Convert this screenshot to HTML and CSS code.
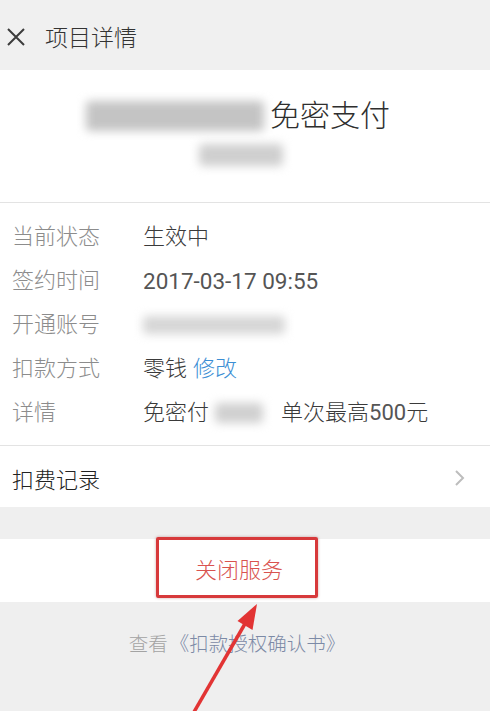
FILE: index.html
```html
<!DOCTYPE html>
<html lang="zh-CN">
<head>
<meta charset="utf-8">
<title>项目详情</title>
<link rel="stylesheet" href="styles.css">
</head>
<body>
<div class="page">
  <header class="topbar">
    <svg class="close" width="20" height="20" viewBox="0 0 20 20"><path d="M2 2 L18 18 M18 2 L2 18" stroke="#3c3c3c" stroke-width="2" fill="none"/></svg>
    <span class="topbar-title">项目详情</span>
  </header>

  <section class="hero">
    <div class="hero-title"><span class="blur blur-name"></span><span>免密支付</span></div>
    <div class="hero-sub"><span class="blur blur-sub"></span></div>
  </section>

  <section class="info">
    <div class="row"><span class="label">当前状态</span><span class="value">生效中</span></div>
    <div class="row"><span class="label">签约时间</span><span class="value num">2017-03-17 09:55</span></div>
    <div class="row"><span class="label">开通账号</span><span class="value"><span class="blur blur-account"></span></span></div>
    <div class="row"><span class="label">扣款方式</span><span class="value">零钱 <span class="link">修改</span></span></div>
    <div class="row"><span class="label">详情</span><span class="value">免密付<span class="blur blur-detail"></span>单次最高<span class="digits">500</span>元</span></div>
  </section>

  <section class="record">
    <span class="record-label">扣费记录</span>
    <svg class="chevron" width="12" height="18" viewBox="0 0 12 18"><path d="M2 2 L9 9 L2 16" stroke="#bdbdbd" stroke-width="2" fill="none"/></svg>
  </section>

  <div class="gap"></div>

  <section class="action">
    <span class="action-text">关闭服务</span>
  </section>

  <section class="footer">
    <span class="muted">查看</span><span class="doc">《扣款授权确认书》</span>
  </section>

  <div class="highlight"></div>
  <svg class="arrow" width="490" height="711" viewBox="0 0 490 711">
    <line x1="194" y1="712" x2="246" y2="622" stroke="#e23434" stroke-width="3.5"/>
    <polygon points="257,604 252.5,630 237.5,621" fill="#e23434"/>
  </svg>
</div>
</body>
</html>
```

FILE: styles.css
```css
* { box-sizing: border-box; }
html, body {
  margin: 0;
  padding: 0;
  background: #efefef;
}
body {
  font-family: "Roboto", "Noto Sans CJK SC", "Noto Sans", sans-serif;
  font-weight: 300;
  color: #333;
}
.page {
  position: relative;
  width: 490px;
  height: 711px;
  overflow: hidden;
  background: #efefef;
}
.topbar {
  height: 70px;
  display: flex;
  align-items: center;
  padding: 7px 0 0 6px;
  background: #f0f0f0;
}
.close { display: block; margin-top: -3px; }
.topbar-title {
  margin-left: 19px;
  font-size: 23px;
  color: #333;
  line-height: 1;
}
.hero {
  background: #fff;
  height: 133px;
  display: flex;
  flex-direction: column;
  align-items: center;
  padding: 28px 14px 0 0;
  border-bottom: 1px solid #e3e3e3;
}
.hero-title {
  display: flex;
  align-items: center;
  height: 36px;
  font-size: 30px;
  line-height: 36px;
  color: #2e2e2e;
}
.hero-sub {
  display: flex;
  justify-content: center;
  height: 30px;
  margin-top: 6px;
  padding-left: 5px;
}
.blur {
  display: inline-block;
  background: #bdbdbd;
  filter: blur(5px);
  border-radius: 4px;
}
.blur-name { width: 178px; height: 30px; margin-right: 6px; background: #c4c4c4; }
.blur-sub { width: 84px; height: 22px; margin-top: 4px; background: #cfcfcf; }
.blur-account { width: 142px; height: 18px; vertical-align: middle; background: #d6d6d6; }
.blur-detail { width: 48px; height: 20px; margin: 0 18px 0 6px; vertical-align: middle; background: #d0d0d0; }
.info {
  background: #fff;
  padding: 12px 0 10px 12px;
  border-bottom: 1px solid #e3e3e3;
}
.row {
  display: flex;
  height: 44px;
  align-items: center;
  font-size: 22px;
  line-height: 44px;
}
.label {
  width: 131px;
  flex: none;
  color: #8c8c8c;
}
.value {
  color: #3a3a3a;
  display: flex;
  align-items: center;
}
.num {
  font-weight: 400;
  font-size: 22.5px;
  color: #555;
}
.digits {
  font-weight: 400;
  color: #555;
}
.link { color: #3b8ed4; margin-left: 6px; }
.record {
  background: #fff;
  height: 61px;
  display: flex;
  align-items: center;
  justify-content: space-between;
  padding: 2px 24px 0 12px;
}
.record-label {
  font-size: 22px;
  color: #222;
}
.chevron { display: block; }
.gap { height: 32px; }
.action {
  background: #fff;
  height: 63px;
  display: flex;
  align-items: center;
  justify-content: center;
  padding-right: 12px;
}
.action-text {
  font-size: 22px;
  color: #d9534f;
  line-height: 1;
}
.footer {
  display: flex;
  justify-content: center;
  padding: 30px 16px 0 0;
  font-size: 19.5px;
  line-height: 26px;
}
.muted { color: #a3a3a3; margin-right: 2px; }
.doc { color: #7c8aa6; }
.highlight {
  position: absolute;
  left: 156px;
  top: 537px;
  width: 162px;
  height: 61px;
  border: 3px solid #d7393b;
  border-radius: 2px;
  box-shadow: 0 0 3px rgba(120, 0, 0, 0.35);
}
.arrow {
  position: absolute;
  left: 0;
  top: 0;
  pointer-events: none;
}
```
